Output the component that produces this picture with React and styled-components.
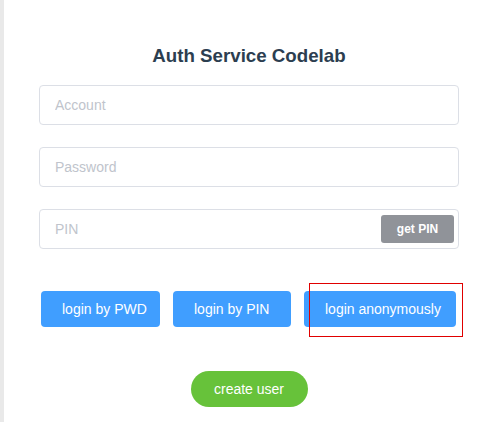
import React from "react";
import styled, { createGlobalStyle } from "styled-components";

const Global = createGlobalStyle`
  html, body { margin: 0; padding: 0; background: #fff; }
  body { font-family: "Liberation Sans", Arial, sans-serif; }
  * { box-sizing: border-box; }
`;

const Page = styled.div`
  display: flex;
  min-height: 422px;
  width: 492px;
`;

const Strip = styled.div`
  width: 4px;
  background: #e9e9e9;
  flex: none;
`;

const Main = styled.div`
  flex: 1;
  padding-left: 35px;
`;

const Form = styled.div`
  width: 420px;
  display: flex;
  flex-direction: column;
`;

const Title = styled.h3`
  margin: 45px 0 19px;
  font-size: 18.72px;
  line-height: 21px;
  font-weight: bold;
  color: #2c3e50;
  text-align: center;
`;

const Field = styled.div`
  height: 40px;
  border: 1px solid #dcdfe6;
  border-radius: 4px;
  display: flex;
  align-items: center;
  padding: 0 4px 0 15px;
  margin-bottom: ${(p) => p.$mb || 22}px;
`;

const Input = styled.input`
  flex: 1;
  min-width: 0;
  border: none;
  outline: none;
  font: 14px "Liberation Sans", Arial, sans-serif;
  color: #606266;
  padding: 0;
  background: transparent;
  &::placeholder { color: #c0c4cc; }
`;

const PinButton = styled.button`
  height: 28px;
  width: 73px;
  border: none;
  border-radius: 3px;
  background: #909399;
  color: #fff;
  font: bold 12px "Liberation Sans", Arial, sans-serif;
  padding: 0;
  cursor: pointer;
`;

const ButtonRow = styled.div`
  position: relative;
  display: flex;
  gap: 13px;
  padding-left: 2px;
  margin-top: 20px;
`;

const LoginButton = styled.button`
  height: 36px;
  width: ${(p) => p.$w}px;
  border: none;
  border-radius: 4px;
  background: #409eff;
  color: #fff;
  font: 14px "Liberation Sans", Arial, sans-serif;
  text-align: left;
  padding: 0 0 0 21px;
  cursor: pointer;
`;

const Highlight = styled.div`
  position: absolute;
  left: 270px;
  top: -8px;
  width: 154px;
  height: 54px;
  border: 1px solid #e00000;
  pointer-events: none;
`;

const CreateRow = styled.div`
  display: flex;
  justify-content: center;
  margin-top: 44px;
`;

const CreateButton = styled.button`
  height: 36px;
  width: 117px;
  border: none;
  border-radius: 18px;
  background: #67c23a;
  color: #fff;
  font: 14px "Liberation Sans", Arial, sans-serif;
  padding: 0;
  cursor: pointer;
`;

export default function App() {
  return (
    <>
      <Global />
      <Page>
        <Strip />
        <Main>
          <Form>
            <Title>Auth Service Codelab</Title>
            <Field>
              <Input placeholder="Account" />
            </Field>
            <Field>
              <Input placeholder="Password" type="password" />
            </Field>
            <Field $mb={0}>
              <Input placeholder="PIN" />
              <PinButton>get PIN</PinButton>
            </Field>
            <ButtonRow>
              <LoginButton $w={119}>login by PWD</LoginButton>
              <LoginButton $w={118}>login by PIN</LoginButton>
              <LoginButton $w={152}>login anonymously</LoginButton>
              <Highlight />
            </ButtonRow>
            <CreateRow>
              <CreateButton>create user</CreateButton>
            </CreateRow>
          </Form>
        </Main>
      </Page>
    </>
  );
}
